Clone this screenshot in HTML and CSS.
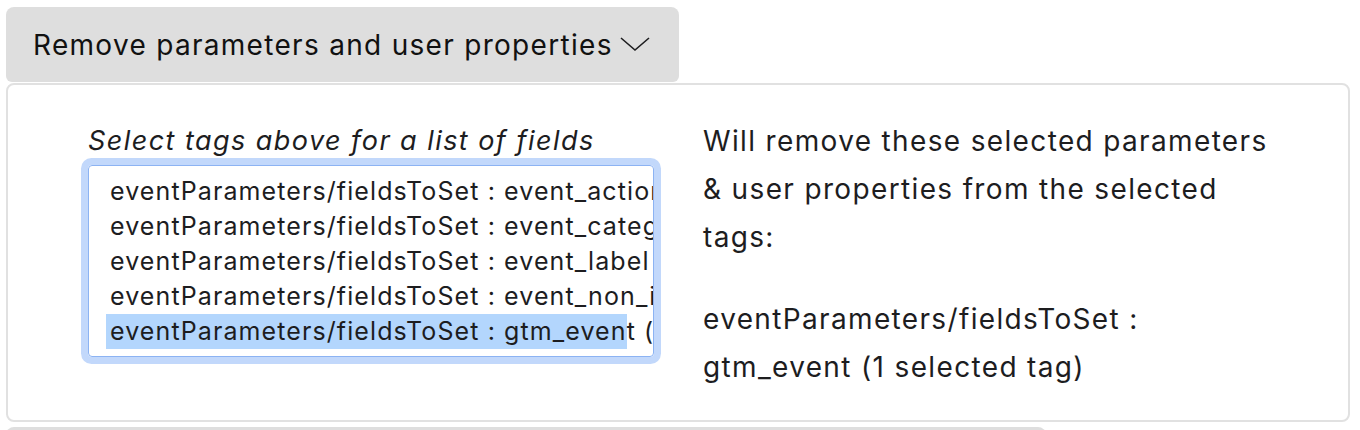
FILE: index.html
```html
<!DOCTYPE html>
<html>
<head>
<meta charset="utf-8">
<link rel="stylesheet" href="styles.css">
</head>
<body>
<div class="page">
  <button class="toggle">
    <span class="toggle-label">Remove parameters and user properties</span>
    <svg class="chevron" width="32" height="16" viewBox="0 0 32 16"><polyline points="2,2 16,14 30,2" fill="none" stroke="#1d1d1f" stroke-width="1.6"/></svg>
  </button>
  <div class="panel">
    <div class="left">
      <div class="hint">Select tags above for a list of fields</div>
      <div class="listbox">
        <div class="option">eventParameters/fieldsToSet : event_action (1 selected tag)</div>
        <div class="option">eventParameters/fieldsToSet : event_category (1 selected tag)</div>
        <div class="option">eventParameters/fieldsToSet : event_label (1 selected tag)</div>
        <div class="option">eventParameters/fieldsToSet : event_non_interaction (1 selected tag)</div>
        <div class="option selected">eventParameters/fieldsToSet : gtm_event (1 selected tag)</div>
      </div>
    </div>
    <div class="right">
      <p class="para">Will remove these selected parameters &amp; user properties from the selected tags:</p>
      <p class="para">eventParameters/fieldsToSet : gtm_event (1 selected tag)</p>
    </div>
  </div>
  <div class="next-bar"></div>
</div>
</body>
</html>
```
FILE: styles.css
```css
html, body {
  margin: 0;
  padding: 0;
  background: #ffffff;
  overflow: hidden;
}
.page {
  padding: 7px 0 0 6px;
  font-family: Inter, "Noto Sans", sans-serif;
  color: #1d1d1f;
}
.toggle {
  display: flex;
  align-items: center;
  height: 75px;
  width: 673px;
  box-sizing: border-box;
  padding: 0 0 0 27px;
  border: none;
  border-radius: 8px 8px 6px 6px;
  background: #dedede;
  font-family: inherit;
  color: #111;
  font-size: 28px;
  letter-spacing: 1.3px;
  cursor: pointer;
}
.chevron {
  margin-left: 6px;
  margin-top: -1px;
}
.panel {
  margin-top: 1px;
  width: 1344px;
  box-sizing: border-box;
  border: 2px solid #e1e1e1;
  border-radius: 8px;
  padding: 32px 0 29px 80px;
  display: flex;
  gap: 49px;
}
.left {
  width: 566px;
  flex: none;
}
.hint {
  font-style: italic;
  font-size: 27px;
  letter-spacing: 1.45px;
  line-height: 48px;
  white-space: nowrap;
}
.listbox {
  height: 192px;
  box-sizing: border-box;
  border: 1.5px solid #8cb3f3;
  border-radius: 4px;
  box-shadow: 0 0 0 7px #c2d8fb;
  padding: 8px 0 0 17px;
  overflow: hidden;
}
.option {
  height: 35px;
  line-height: 35px;
  font-size: 25px;
  letter-spacing: 1.1px;
  white-space: nowrap;
  padding-left: 4px;
  overflow: hidden;
  width: 544px;
}
.option.selected {
  background: linear-gradient(#b3d6fd, #b3d6fd) no-repeat 0 0 / 521px 100%;
}
.right {
  width: 572px;
  flex: none;
}
.para {
  margin: 0 0 34px;
  font-size: 28px;
  letter-spacing: 1.35px;
  line-height: 48px;
}
.para:last-child {
  margin-bottom: 0;
}
.next-bar {
  margin-top: 5px;
  width: 1040px;
  height: 20px;
  background: #dedede;
  border-radius: 8px 8px 0 0;
}
```
